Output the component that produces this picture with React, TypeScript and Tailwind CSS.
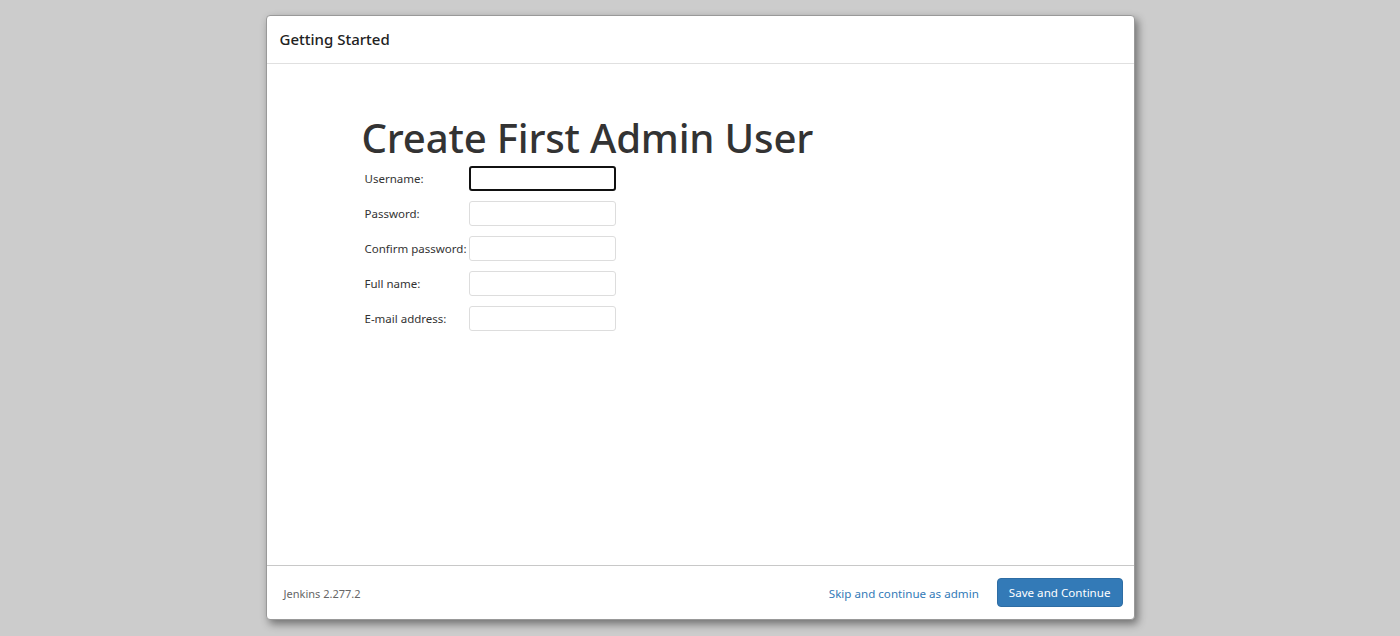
export default function App() {
  const fields = ["Username:", "Password:", "Confirm password:", "Full name:", "E-mail address:"];
  return (
    <div
      className="h-[636px] w-full bg-[#cccccc] flex justify-center pt-[15px]"
      style={{ fontFamily: '"Noto Sans", "Open Sans", sans-serif' }}
    >
      <div className="w-[869px] h-[605px] bg-white border border-[#999] rounded-[4px] shadow-[3px_4px_8px_rgba(0,0,0,0.45)] flex flex-col">
        <div className="h-[48px] border-b border-[#e0e0e0] flex items-center px-[13px]">
          <h4 className="text-[15px] font-medium text-[#222]">Getting Started</h4>
        </div>
        <div className="flex-1 pl-[95px] pt-[50px]">
          <h1 className="text-[40.2px] leading-[48px] text-[#333] font-medium tracking-[-0.2px]">
            Create First Admin User
          </h1>
          <div className="mt-[4px] flex flex-col gap-[10px] pl-[3px]">
            {fields.map((f, i) => (
              <div key={f} className="flex items-center">
                <label className="w-[104px] text-[11.5px] text-[#333] whitespace-nowrap">{f}</label>
                <input
                  type={i === 1 || i === 2 ? "password" : "text"}
                  className={
                    "w-[147px] h-[25px] rounded-[3px] outline-none bg-white " +
                    (i === 0 ? "border-2 border-[#111]" : "border border-[#ddd]")
                  }
                />
              </div>
            ))}
          </div>
        </div>
        <div className="h-[54px] border-t border-[#c8c8c8] flex items-center justify-between pl-[17px] pr-[11px]">
          <span className="text-[11px] text-[#666] mt-[4px]">Jenkins 2.277.2</span>
          <div className="flex items-center gap-[18px]">
            <a className="text-[11.6px] text-[#337ab7] cursor-pointer mt-[2px]">Skip and continue as admin</a>
            <button className="h-[29px] px-[11px] bg-[#337ab7] border border-[#2e6da4] rounded-[4px] text-white text-[11.6px]">
              Save and Continue
            </button>
          </div>
        </div>
      </div>
    </div>
  );
}
